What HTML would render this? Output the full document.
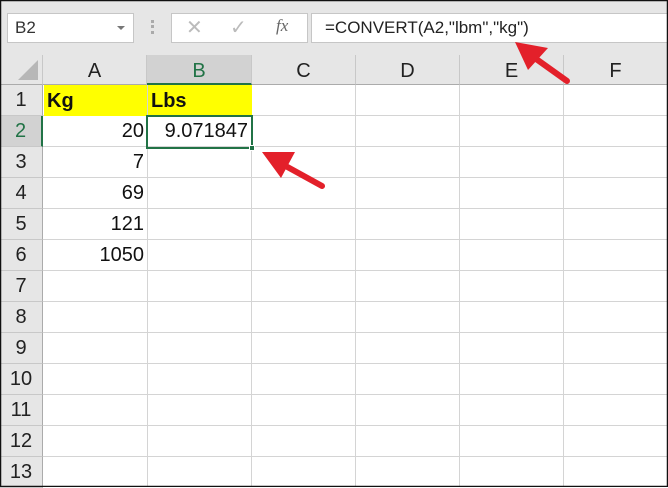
<!DOCTYPE html><html><head><style>
*{margin:0;padding:0;box-sizing:border-box}
body{width:668px;height:487px;overflow:hidden;background:#fff;font-family:"Liberation Sans",sans-serif;position:relative}
.top{position:absolute;left:0;top:0;width:668px;height:55px;background:#e6e6e6}
.box{position:absolute;background:#fff;border:1px solid #c6c6c6}
.ch{position:absolute;top:55px;height:30px;background:#e6e6e6;border-right:1px solid #c8c8c8;border-bottom:1px solid #ababab;font-size:20px;text-align:center;line-height:32px;color:#222}
.rh{position:absolute;left:0;width:43px;height:31px;background:#e6e6e6;border-bottom:1px solid #c8c8c8;border-right:1px solid #ababab;font-size:20px;text-align:center;line-height:31px;color:#222}
.vl{position:absolute;top:85px;height:402px;width:1px;background:#d4d4d4}
.hl{position:absolute;left:43px;width:625px;height:1px;background:#d4d4d4}
.c{position:absolute;font-size:20px;line-height:31px;color:#111}
</style></head><body>
<div class="top"></div>
<div class="box" style="left:7px;top:13px;width:127px;height:30px;font-size:17px;line-height:28px;padding-left:7px;color:#333">B2<span style="position:absolute;right:8px;top:12px;border-left:4px solid transparent;border-right:4px solid transparent;border-top:4px solid #777"></span></div>
<div style="position:absolute;left:151px;top:20px;width:3px;height:14px;border-left:3px dotted #aaa"></div>
<div class="box" style="left:171px;top:13px;width:137px;height:30px;color:#bbb;font-size:20px">
<span style="position:absolute;left:14px;top:1px">✕</span><span style="position:absolute;left:58px;top:1px">✓</span><span style="position:absolute;left:104px;top:2px;color:#666;font-family:'Liberation Serif',serif;font-style:italic;font-size:17px">fx</span></div>
<div class="box" style="left:311px;top:13px;width:360px;height:30px;font-size:17px;line-height:28px;padding-left:13px;color:#222">=CONVERT(A2,"lbm","kg")</div>
<div class="ch" style="left:0;width:43px"><svg width="43" height="30" style="position:absolute;left:0;top:0"><polygon points="38,5 38,25 18,25" fill="#b7b7b7"/></svg></div>
<div class="ch" style="left:43px;width:104px">A</div>
<div class="ch" style="left:147px;width:105px;background:#d2d2d2;color:#217346;border-bottom:2px solid #217346">B</div>
<div class="ch" style="left:252px;width:104px">C</div>
<div class="ch" style="left:356px;width:104px">D</div>
<div class="ch" style="left:460px;width:104px">E</div>
<div class="ch" style="left:564px;width:104px">F</div>
<div class="rh" style="top:85px">1</div>
<div class="rh" style="top:116px;background:#d2d2d2;color:#217346;border-right:2px solid #217346">2</div>
<div class="rh" style="top:147px">3</div><div class="rh" style="top:178px">4</div><div class="rh" style="top:209px">5</div><div class="rh" style="top:240px">6</div><div class="rh" style="top:271px">7</div><div class="rh" style="top:302px">8</div><div class="rh" style="top:333px">9</div><div class="rh" style="top:364px">10</div><div class="rh" style="top:395px">11</div><div class="rh" style="top:426px">12</div><div class="rh" style="top:457px">13</div>
<div class="vl" style="left:147px"></div><div class="vl" style="left:251px"></div><div class="vl" style="left:355px"></div><div class="vl" style="left:459px"></div><div class="vl" style="left:563px"></div>
<div class="hl" style="top:115px"></div><div class="hl" style="top:146px"></div><div class="hl" style="top:177px"></div><div class="hl" style="top:208px"></div><div class="hl" style="top:239px"></div><div class="hl" style="top:270px"></div><div class="hl" style="top:301px"></div><div class="hl" style="top:332px"></div><div class="hl" style="top:363px"></div><div class="hl" style="top:394px"></div><div class="hl" style="top:425px"></div><div class="hl" style="top:456px"></div>
<div style="position:absolute;left:44px;top:85px;width:208px;height:31px;background:#ffff00"></div>
<div style="position:absolute;left:147px;top:85px;width:1px;height:31px;background:#d4d4d4"></div>
<div class="c" style="left:47px;top:86px;font-weight:bold">Kg</div>
<div class="c" style="left:151px;top:86px;font-weight:bold">Lbs</div>
<div class="c" style="left:44px;top:116px;width:100px;text-align:right">20</div>
<div class="c" style="left:44px;top:147px;width:100px;text-align:right">7</div>
<div class="c" style="left:44px;top:178px;width:100px;text-align:right">69</div>
<div class="c" style="left:44px;top:209px;width:100px;text-align:right">121</div>
<div class="c" style="left:44px;top:240px;width:100px;text-align:right">1050</div>
<div style="position:absolute;left:146px;top:115px;width:107px;height:34px;border:2px solid #217346"></div>
<div class="c" style="left:148px;top:116px;width:100px;text-align:right">9.071847</div>
<div style="position:absolute;left:249px;top:145px;width:6px;height:6px;background:#217346;border:1px solid #fff"></div>
<svg width="668" height="487" style="position:absolute;left:0;top:0">
<line x1="567" y1="81" x2="532" y2="56" stroke="#e3202a" stroke-width="6" stroke-linecap="round"/>
<polygon points="515,42 548,48 528,70" fill="#e3202a"/>
<line x1="322" y1="186" x2="282" y2="164" stroke="#e3202a" stroke-width="6" stroke-linecap="round"/>
<polygon points="262,152 295,152 281,178" fill="#e3202a"/>
<rect x="0.5" y="0.5" width="667" height="486" fill="none" stroke="#111" stroke-width="1.5"/>
</svg>
</body></html>
